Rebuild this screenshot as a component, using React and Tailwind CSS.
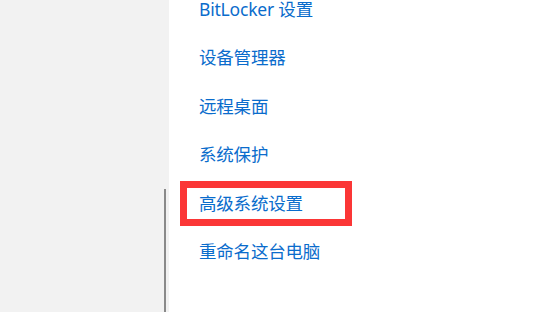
const items = ['BitLocker 设置', '设备管理器', '远程桌面', '系统保护', '高级系统设置', '重命名这台电脑'];

const App = () => {
  return (
    <div
      className="flex h-[312px] w-[553px] overflow-hidden bg-white"
      style={{ fontFamily: '"Noto Sans", "Noto Sans CJK SC", sans-serif' }}
    >
      {/* Left nav pane with its scrollbar */}
      <div className="flex w-[169px] shrink-0 justify-end bg-[#f2f2f2] pr-[3px]">
        <div className="mt-[189px] h-full w-[2px] bg-[#8a8a8a]" />
      </div>

      {/* Related settings links */}
      <div className="flex flex-1 flex-col pl-[30px] -mt-[15px]">
        {items.map((label) => (
          <div key={label} className="relative flex h-[48.5px] shrink-0 items-center">
            {label === '高级系统设置' && (
              <div className="absolute left-[-19px] top-[2px] h-[45px] w-[172px] border-[7px] border-[#fb3636]" />
            )}
            <span className="relative text-[17.5px] leading-none tracking-[-0.2px] text-[#0a6ccc]">{label}</span>
          </div>
        ))}
      </div>
    </div>
  );
};

export default App;
